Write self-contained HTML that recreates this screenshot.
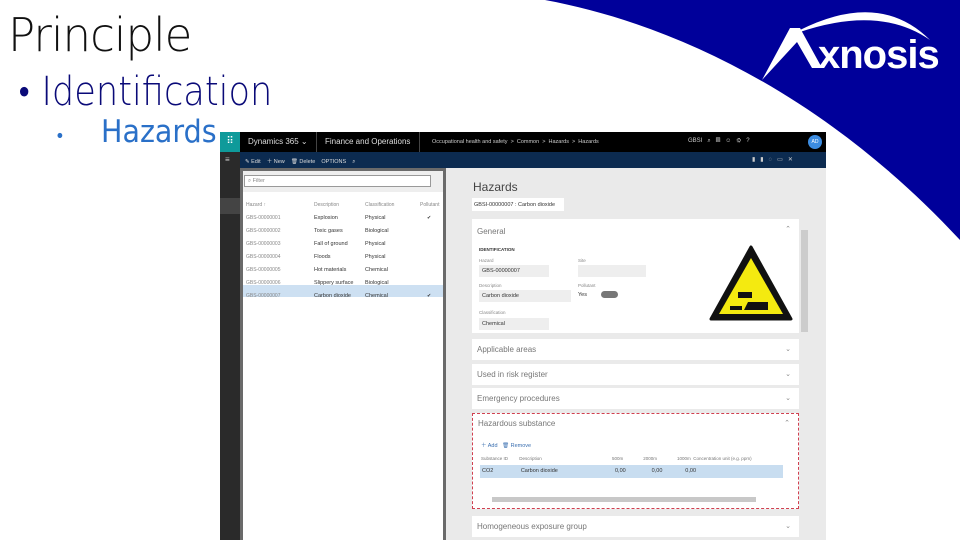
<!DOCTYPE html>
<html><head><meta charset="utf-8"><style>
*{margin:0;padding:0;box-sizing:border-box}
body{width:960px;height:540px;position:relative;overflow:hidden;background:#fff;font-family:"Liberation Sans",sans-serif}
.a{position:absolute}
.t{font-size:6px;color:#333;white-space:nowrap}
.card{position:absolute;background:#fff;left:472px;width:327px}
.card span{position:absolute;left:5px;font-size:8px;color:#777}
.card i{position:absolute;right:8px;font-style:normal;font-size:7px;color:#888}
</style></head><body>
<svg class="a" style="left:0;top:0" width="960" height="540"><path d="M545,0 C680,25 830,100 960,240 L960,0 Z" fill="#00009a"/>
<path d="M762,80 L790,28 L800,28 L822,68 L812,68 L797,42 Z" fill="#fff"/>
<path d="M800,30 Q880,-10 930,40 Q880,5 800,32Z" fill="#fff"/>
<text x="818" y="68" font-family="Liberation Sans" font-weight="bold" font-size="40" fill="#fff" letter-spacing="-1">xnosis</text></svg>
<div class="a" style="left:8px;top:8px;font-size:46px;color:#111;font-family:'DejaVu Sans';font-weight:200;letter-spacing:-1px;transform:scaleX(0.98);transform-origin:left">Principle</div>
<div class="a" style="left:18px;top:68px;font-size:40px;color:#0a0a78;font-family:'DejaVu Sans';font-weight:200;transform:scaleX(0.88);transform-origin:left">• Identification</div>
<div class="a" style="left:55px;top:114px;font-size:31px;color:#2a70c8;font-family:'DejaVu Sans';transform:scaleX(0.92);transform-origin:left"><span style="font-size:18px">•</span>&nbsp;&nbsp;&nbsp;&nbsp;Hazards</div>

<div class="a" style="left:220px;top:132px;width:606px;height:408px;background:#eaeaea"></div>
<div class="a" style="left:220px;top:132px;width:606px;height:20px;background:#000"></div>
<div class="a" style="left:220px;top:132px;width:20px;height:20px;background:#0f9a9a;color:#fff;font-size:10px;text-align:center;line-height:20px">⠿</div>
<div class="a t" style="left:248px;top:137px;color:#ddd;font-size:8px">Dynamics 365 ⌄</div>
<div class="a" style="left:316px;top:132px;width:1px;height:20px;background:#444"></div>
<div class="a t" style="left:325px;top:137px;color:#ddd;font-size:8px">Finance and Operations</div>
<div class="a" style="left:419px;top:132px;width:1px;height:20px;background:#444"></div>
<div class="a t" style="left:432px;top:139px;color:#ccc;font-size:5.5px">Occupational health and safety &nbsp;&gt;&nbsp; Common &nbsp;&gt;&nbsp; Hazards &nbsp;&gt;&nbsp; Hazards</div>
<div class="a t" style="left:688px;top:138px;color:#ccc;font-size:6px">GBSI &nbsp;&nbsp;⌕ &nbsp;&nbsp;▤ &nbsp;&nbsp;☺ &nbsp;&nbsp;⚙ &nbsp;&nbsp;?</div>
<div class="a" style="left:808px;top:135px;width:14px;height:14px;border-radius:50%;background:#3c8ce0;color:#fff;font-size:5px;text-align:center;line-height:14px">AD</div>
<div class="a" style="left:220px;top:152px;width:606px;height:16px;background:#0c2b50"></div>
<div class="a" style="left:220px;top:152px;width:20px;height:388px;background:#2a2a2a"></div>
<div class="a" style="left:220px;top:198px;width:20px;height:16px;background:#444"></div>
<div class="a t" style="left:225px;top:155px;color:#ccc;font-size:8px">≡</div>
<div class="a t" style="left:245px;top:157px;color:#ddd;font-size:5.5px">✎ Edit &nbsp;&nbsp;&nbsp;＋ New &nbsp;&nbsp;&nbsp;🗑 Delete &nbsp;&nbsp;&nbsp;OPTIONS &nbsp;&nbsp;&nbsp;⌕</div>
<div class="a t" style="left:752px;top:156px;color:#ccc;font-size:6px">▮ &nbsp;&nbsp;▮ &nbsp;&nbsp;◌ &nbsp;&nbsp;▭ &nbsp;&nbsp;✕</div>

<div class="a" style="left:240px;top:168px;width:206px;height:372px;background:#6a6a6a"></div>
<div class="a" style="left:243px;top:171px;width:200px;height:369px;background:#fff"></div>
<div class="a" style="left:243px;top:171px;width:200px;height:21px;background:#eee"></div>
<div class="a" style="left:244px;top:175px;width:187px;height:12px;background:#fff;border:1px solid #999"></div>
<div class="a t" style="left:248px;top:178px;color:#888;font-size:5.5px">⌕ Filter</div>
<div class="a" style="left:243px;top:285px;width:200px;height:12px;background:#cde0f2"></div>
<div class="a t" style="left:246px;top:199px;color:#888;font-size:5px;line-height:13px">Hazard ↑<br>GBS-00000001<br>GBS-00000002<br>GBS-00000003<br>GBS-00000004<br>GBS-00000005<br>GBS-00000006<br>GBS-00000007</div>
<div class="a t" style="left:314px;top:199px;font-size:5.5px;line-height:13px"><span style="color:#888;font-size:5px">Description</span><br>Explosion<br>Toxic gases<br>Fall of ground<br>Floods<br>Hot materials<br>Slippery surface<br>Carbon dioxide</div>
<div class="a t" style="left:365px;top:199px;font-size:5.5px;line-height:13px"><span style="color:#888;font-size:5px">Classification</span><br>Physical<br>Biological<br>Physical<br>Physical<br>Chemical<br>Biological<br>Chemical</div>
<div class="a t" style="left:420px;top:199px;font-size:5px;line-height:13px"><span style="color:#888">Pollutant</span><br>&nbsp;&nbsp;&nbsp;&nbsp;&nbsp;✔<br><br><br><br><br><br>&nbsp;&nbsp;&nbsp;&nbsp;&nbsp;✔</div>
<div class="a t" style="left:473px;top:180px;font-size:12px;color:#444">Hazards</div>
<div class="a" style="left:472px;top:198px;width:92px;height:13px;background:#fff"></div>
<div class="a t" style="left:474px;top:202px;font-size:5.5px">GBSI-00000007 : Carbon dioxide</div>

<div class="card" style="top:219px;height:114px"><span style="top:8px;font-size:8px">General</span><i style="top:6px">⌃</i></div>
<div class="a t" style="left:479px;top:247px;font-size:4.5px;font-weight:bold">IDENTIFICATION</div>
<div class="a t" style="left:479px;top:258px;color:#888;font-size:4.5px">Hazard</div>
<div class="a" style="left:479px;top:265px;width:70px;height:12px;background:#eee"></div>
<div class="a t" style="left:482px;top:268px;font-size:5.5px">GBS-00000007</div>
<div class="a t" style="left:479px;top:283px;color:#888;font-size:4.5px">Description</div>
<div class="a" style="left:479px;top:290px;width:92px;height:12px;background:#eee"></div>
<div class="a t" style="left:482px;top:293px;font-size:5.5px">Carbon dioxide</div>
<div class="a t" style="left:479px;top:310px;color:#888;font-size:4.5px">Classification</div>
<div class="a" style="left:479px;top:318px;width:70px;height:12px;background:#eee"></div>
<div class="a t" style="left:482px;top:321px;font-size:5.5px">Chemical</div>
<div class="a t" style="left:578px;top:258px;color:#888;font-size:4.5px">Site</div>
<div class="a" style="left:578px;top:265px;width:68px;height:12px;background:#eee"></div>
<div class="a t" style="left:578px;top:283px;color:#888;font-size:4.5px">Pollutant</div>
<div class="a t" style="left:578px;top:292px;font-size:5.5px">Yes</div>
<div class="a" style="left:601px;top:291px;width:17px;height:7px;border-radius:4px;background:#777"></div>
<svg class="a" style="left:708px;top:244px" width="86" height="78"><path d="M43,3 L83,75 L3,75 Z" fill="#111" stroke="#111" stroke-width="3" stroke-linejoin="round"/><path d="M43,14 L75,70 L11,70 Z" fill="#f4ea10"/><path d="M30,48 h14 v6 h-14z M40,58 h20 v8 h-24z M22,62 h12 v4 h-12z" fill="#111"/></svg>
<div class="a" style="left:801px;top:230px;width:7px;height:102px;background:#ccc"></div>

<div class="card" style="top:339px;height:21px"><span style="top:6px">Applicable areas</span><i style="top:6px">⌄</i></div>
<div class="card" style="top:364px;height:21px"><span style="top:6px">Used in risk register</span><i style="top:6px">⌄</i></div>
<div class="card" style="top:388px;height:21px"><span style="top:6px">Emergency procedures</span><i style="top:6px">⌄</i></div>
<div class="card" style="top:413px;height:96px;border:1px dashed #d04050"><span style="top:5px">Hazardous substance</span><i style="top:5px">⌃</i></div>
<div class="a t" style="left:481px;top:441px;color:#3a6fb0;font-size:5.5px">＋ Add &nbsp;&nbsp;🗑 Remove</div>
<div class="a t" style="left:481px;top:456px;color:#777;font-size:4.5px">Substance ID &nbsp;&nbsp;&nbsp;&nbsp;&nbsp;&nbsp;&nbsp;&nbsp;Description</div>
<div class="a t" style="left:612px;top:456px;color:#777;font-size:4.5px">500m &nbsp;&nbsp;&nbsp;&nbsp;&nbsp;&nbsp;&nbsp;&nbsp;&nbsp;&nbsp;&nbsp;&nbsp;&nbsp;&nbsp;&nbsp;2000m &nbsp;&nbsp;&nbsp;&nbsp;&nbsp;&nbsp;&nbsp;&nbsp;&nbsp;&nbsp;&nbsp;&nbsp;&nbsp;&nbsp;&nbsp;1000m &nbsp;Concentration unit (e.g. ppm)</div>
<div class="a" style="left:480px;top:465px;width:303px;height:13px;background:#c8ddf0"></div>
<div class="a t" style="left:482px;top:468px;font-size:5.5px">CO2 &nbsp;&nbsp;&nbsp;&nbsp;&nbsp;&nbsp;&nbsp;&nbsp;&nbsp;&nbsp;&nbsp;&nbsp;&nbsp;&nbsp;&nbsp;&nbsp;&nbsp;Carbon dioxide</div>
<div class="a t" style="left:615px;top:468px;font-size:5.5px">0,00 &nbsp;&nbsp;&nbsp;&nbsp;&nbsp;&nbsp;&nbsp;&nbsp;&nbsp;&nbsp;&nbsp;&nbsp;&nbsp;&nbsp;&nbsp;&nbsp;0,00 &nbsp;&nbsp;&nbsp;&nbsp;&nbsp;&nbsp;&nbsp;&nbsp;&nbsp;&nbsp;&nbsp;&nbsp;&nbsp;&nbsp;0,00</div>
<div class="a" style="left:492px;top:497px;width:264px;height:5px;background:#c8c8c8"></div>
<div class="card" style="top:516px;height:21px"><span style="top:6px">Homogeneous exposure group</span><i style="top:6px">⌄</i></div>
</body></html>
